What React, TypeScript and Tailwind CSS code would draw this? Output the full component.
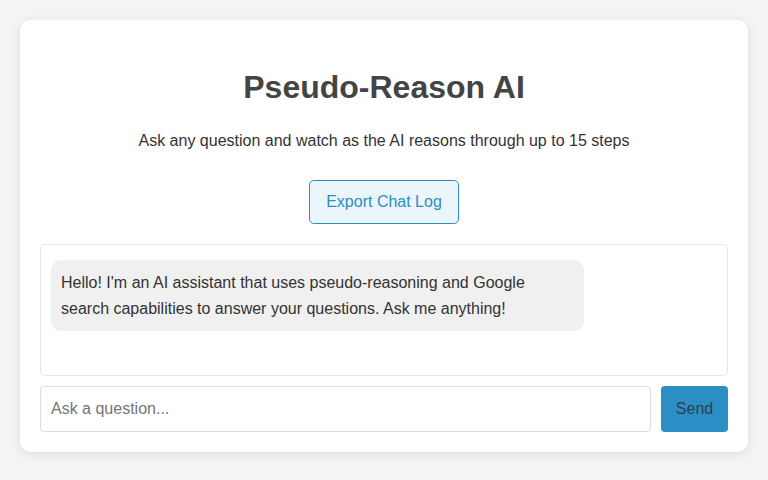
import { useState } from 'react';

export default function App() {
  const [question, setQuestion] = useState('');

  return (
    <div className="min-h-screen bg-[#f4f4f4] p-5 font-['Liberation_Sans',Arial,sans-serif] text-[#333]">
      <div className="rounded-[10px] bg-white px-5 pb-5 pt-[49px] shadow-[0_2px_10px_rgba(0,0,0,0.1)]">
        {/* Title */}
        <h1 className="text-center text-[32px] font-bold leading-[37px] text-[#444]">
          Pseudo-Reason AI
        </h1>
        <p className="mt-[26px] text-center text-base leading-[18px]">
          Ask any question and watch as the AI reasons through up to 15 steps
        </p>

        <div className="mt-[30px] flex justify-center">
          <button className="h-[44px] rounded-[5px] border border-[#2a8fbd] bg-[#eaf6fc] px-4 text-base text-[#2a8fbd]">
            Export Chat Log
          </button>
        </div>

        {/* Chat */}
        <div className="mt-5 h-[132px] rounded-[5px] border border-[#e6e6e6] px-[10px] pt-[15px]">
          <div className="max-w-[80%] rounded-[10px] bg-[#f0f0f0] p-[10px] text-base leading-[25.5px]">
            Hello! I'm an AI assistant that uses pseudo-reasoning and Google search capabilities to answer your
            questions. Ask me anything!
          </div>
        </div>

        {/* Input */}
        <div className="mt-[10px] flex gap-[10px]">
          <input
            value={question}
            onChange={(e) => setQuestion(e.target.value)}
            placeholder="Ask a question..."
            className="h-[46px] flex-1 rounded-[4px] border border-[#dddddd] px-[10px] text-base outline-none placeholder:text-[#757575]"
          />
          <button className="h-[46px] w-[67px] rounded-[4px] bg-[#2b8fc5] text-base text-[#2c3e50]">Send</button>
        </div>
      </div>
    </div>
  );
}
